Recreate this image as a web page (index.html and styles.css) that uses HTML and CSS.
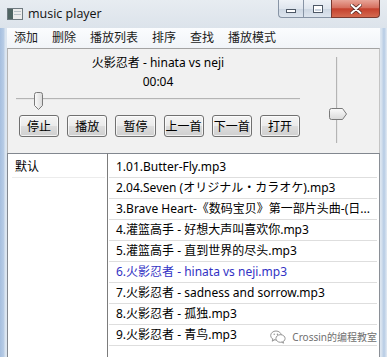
FILE: index.html
```html
<!DOCTYPE html>
<html lang="zh-CN">
<head>
    <meta charset="UTF-8">
    <meta name="viewport" content="width=device-width, initial-scale=1.0">
    <title>music player</title>
    <link rel="stylesheet" href="styles.css">
</head>
<body>
    <div class="window">
        <div class="titlebar">
            <svg class="app-icon" width="16" height="12" viewBox="0 0 16 12">
                <rect x="0.5" y="0.5" width="15" height="11" fill="#ececec" stroke="#6f7a80"/>
                <rect x="1" y="1" width="5" height="10" fill="#4f6462"/>
                <rect x="7" y="3" width="7" height="1" fill="#b9c2c8"/>
                <rect x="7" y="6" width="7" height="1" fill="#b9c2c8"/>
            </svg>
            <span class="title">music player</span>
            <div class="caption-buttons">
                <div class="cap-btn cap-min"><span class="min-glyph"></span></div>
                <div class="cap-btn cap-max"><span class="max-glyph"></span></div>
                <div class="cap-btn cap-close">
                    <svg width="12" height="10" viewBox="0 0 12 10">
                        <path d="M1.5 1 L10.5 9 M10.5 1 L1.5 9" stroke="#5a2a24" stroke-width="3.6" stroke-linecap="round"/>
                        <path d="M1.5 1 L10.5 9 M10.5 1 L1.5 9" stroke="#ffffff" stroke-width="2" stroke-linecap="round"/>
                    </svg>
                </div>
            </div>
        </div>

        <div class="client">
            <ul class="menubar">
                <li>添加</li>
                <li>删除</li>
                <li>播放列表</li>
                <li>排序</li>
                <li>查找</li>
                <li>播放模式</li>
            </ul>

            <div class="player">
                <div class="player-main">
                    <div class="song-title">火影忍者 - hinata vs neji</div>
                    <div class="song-time">00:04</div>
                    <div class="hslider">
                        <div class="track"></div>
                        <svg class="thumb" width="11" height="19" viewBox="0 0 11 19">
                            <defs>
                                <linearGradient id="thumbH" x1="0" y1="0" x2="1" y2="0">
                                    <stop offset="0" stop-color="#fbfbfb"/>
                                    <stop offset="1" stop-color="#d9d9d9"/>
                                </linearGradient>
                            </defs>
                            <path d="M1.5 2.5 Q1.5 0.5 3.5 0.5 H7.5 Q9.5 0.5 9.5 2.5 V13.5 L5.5 17.5 L1.5 13.5 Z" fill="url(#thumbH)" stroke="#7a7a7a"/>
                        </svg>
                    </div>
                    <div class="buttons">
                        <button>停止</button>
                        <button>播放</button>
                        <button>暂停</button>
                        <button>上一首</button>
                        <button>下一首</button>
                        <button>打开</button>
                    </div>
                </div>
                <div class="vslider">
                    <div class="track"></div>
                    <svg class="thumb" width="19" height="12" viewBox="0 0 19 12">
                        <defs>
                            <linearGradient id="thumbV" x1="0" y1="0" x2="0" y2="1">
                                <stop offset="0" stop-color="#fbfbfb"/>
                                <stop offset="1" stop-color="#d9d9d9"/>
                            </linearGradient>
                        </defs>
                        <path d="M2.5 0.5 H13.5 L17.5 6 L13.5 11.5 H2.5 Q0.5 11.5 0.5 9.5 V2.5 Q0.5 0.5 2.5 0.5 Z" fill="url(#thumbV)" stroke="#7a7a7a"/>
                    </svg>
                </div>
            </div>

            <div class="lists">
                <div class="playlists">
                    <div class="row">默认</div>
                </div>
                <div class="songs">
                    <div class="row">1.01.Butter-Fly.mp3</div>
                    <div class="row">2.04.Seven (オリジナル・カラオケ).mp3</div>
                    <div class="row">3.Brave Heart-《数码宝贝》第一部片头曲-(日...</div>
                    <div class="row">4.灌篮高手 - 好想大声叫喜欢你.mp3</div>
                    <div class="row">5.灌篮高手 - 直到世界的尽头.mp3</div>
                    <div class="row current">6.火影忍者 - hinata vs neji.mp3</div>
                    <div class="row">7.火影忍者 - sadness and sorrow.mp3</div>
                    <div class="row">8.火影忍者 - 孤独.mp3</div>
                    <div class="row">9.火影忍者 - 青鸟.mp3</div>

                    <div class="watermark">
                        <svg width="16" height="14" viewBox="0 0 16 14">
                            <ellipse cx="6" cy="5.5" rx="5.3" ry="4.5" fill="#ffffff" stroke="#8a8a8a" stroke-width="0.9"/>
                            <path d="M2.8 9 L2.2 11.2 L4.6 9.8" fill="#ffffff" stroke="#8a8a8a" stroke-width="0.9"/>
                            <ellipse cx="10.5" cy="8.5" rx="4.6" ry="3.8" fill="#ffffff" stroke="#8a8a8a" stroke-width="0.9"/>
                            <path d="M13 11.6 L13.6 13.2 L11.6 12.2" fill="#ffffff" stroke="#8a8a8a" stroke-width="0.9"/>
                            <circle cx="4.2" cy="4.2" r="0.7" fill="#8a8a8a"/>
                            <circle cx="7.4" cy="4.2" r="0.7" fill="#8a8a8a"/>
                        </svg>
                        <span>Crossin的编程教室</span>
                    </div>
                </div>
            </div>
        </div>
    </div>
</body>
</html>
```

FILE: styles.css
```css
* {
    box-sizing: border-box;
}

body {
    margin: 0;
    font-family: "Noto Sans", "Noto Sans CJK SC", sans-serif;
    font-size: 12px;
    color: #000;
    background-color: #d7e2ee;
}

.window {
    width: 387px;
    height: 357px;
    overflow: hidden;
    display: flex;
    flex-direction: column;
    background: linear-gradient(90deg, #a6bfdf 0, #b9cde6 4px, #dbe5f0 5px, #dbe5f0 381px, #b6cbe4 384px, #e2eaf3 387px);
}

/* title bar */
.titlebar {
    height: 28px;
    flex-shrink: 0;
    display: flex;
    align-items: flex-start;
    background: linear-gradient(180deg, #e7ecf1 0, #dce3eb 100%);
}

.app-icon {
    margin: 8px 0 0 7px;
}

.title {
    margin: 5px 0 0 5px;
    font-family: "Open Sans", "Noto Sans", sans-serif;
    font-size: 12.5px;
    line-height: 18px;
    color: #111;
}

.caption-buttons {
    margin-left: auto;
    margin-right: 7px;
    display: flex;
    height: 18px;
}

.cap-btn {
    height: 18px;
    display: flex;
    align-items: center;
    justify-content: center;
    border: 1px solid #8794a5;
    border-top: none;
}

.cap-min {
    width: 25px;
    border-right: none;
    border-radius: 0 0 0 4px;
    background: linear-gradient(180deg, #eef2f7 0, #dfe6ee 50%, #ccd6e2 51%, #dde5ee 100%);
}

.cap-max {
    width: 28px;
    border-right: none;
    background: linear-gradient(180deg, #eef2f7 0, #dfe6ee 50%, #ccd6e2 51%, #dde5ee 100%);
}

.cap-close {
    width: 49px;
    border-color: #7a3a30;
    border-radius: 0 0 4px 0;
    background: linear-gradient(180deg, #e8a598 0, #d6705f 45%, #c5412d 52%, #d46a50 100%);
}

.min-glyph {
    width: 10px;
    height: 4px;
    margin-top: 5px;
    background: #fff;
    border: 1px solid #4d5866;
}

.max-glyph {
    width: 10px;
    height: 8px;
    border: 1px solid #4d5866;
    box-shadow: inset 0 0 0 1px #fff, inset 0 2px 0 1px #fff;
    background: #c9d3df;
}

/* client area */
.client {
    flex: 1;
    margin: 0 7px;
    display: flex;
    flex-direction: column;
    background-color: #f0f0f0;
}

.menubar {
    list-style: none;
    margin: 0;
    padding: 0;
    height: 20px;
    display: flex;
    background: linear-gradient(180deg, #fbfcfe 0, #f1f4f8 100%);
}

.menubar li {
    padding: 0 7px;
    line-height: 20px;
    color: #1a1a1a;
}

.player {
    height: 105px;
    display: flex;
    border-top: 1px solid #a3a3a3;
    border-left: 1px solid #b4b4b4;
    border-right: 1px solid #c4c4c4;
    background-color: #f1f1f1;
}

.player-main {
    width: 292px;
    padding: 6px 0 0 8px;
}

.song-title,
.song-time {
    text-align: center;
    line-height: 16px;
}

.song-time {
    margin-top: 3px;
}

.hslider {
    position: relative;
    height: 18px;
}

.hslider .track {
    position: absolute;
    left: 0;
    right: 0;
    top: 8px;
    height: 2px;
    border-top: 1px solid #b4b4b4;
    border-bottom: 1px solid #e8e8e8;
}

.hslider .thumb {
    position: absolute;
    left: 17px;
    top: 2px;
}

.buttons {
    margin: 7px 0 0 3px;
    display: flex;
    gap: 8px;
}

.buttons button {
    width: 42px;
    height: 22px;
    padding: 0;
    font: inherit;
    color: #000;
    border: 1px solid #707070;
    border-radius: 3px;
    background: linear-gradient(180deg, #f4f4f4 0, #ebebeb 48%, #dddddd 52%, #cfcfcf 100%);
    box-shadow: inset 0 0 0 1px rgba(255, 255, 255, 0.7);
}

.vslider {
    position: relative;
    width: 19px;
    height: 86px;
    margin: 8px 0 0 30px;
}

.vslider .track {
    position: absolute;
    left: 6px;
    top: 0;
    bottom: 0;
    width: 2px;
    border-left: 1px solid #b4b4b4;
    border-right: 1px solid #e8e8e8;
}

.vslider .thumb {
    position: absolute;
    left: -1px;
    top: 51px;
}

/* lists */
.lists {
    flex: 1;
    display: flex;
    min-height: 0;
}

.playlists,
.songs {
    border-top: 1px solid #82878f;
    background-color: #fff;
    padding-top: 3px;
}

.playlists {
    width: 100px;
    padding-left: 4px;
    padding-right: 2px;
    border-left: 1px solid #82878f;
}

.playlists .row {
    height: 21px;
    line-height: 20px;
    padding-left: 3px;
    border-bottom: 1px solid #ececec;
}

.songs {
    position: relative;
    flex: 1;
    min-width: 0;
    padding-left: 1px;
    padding-right: 2px;
    border-left: 1px solid #7c7c7c;
    border-right: 1px solid #8a8f96;
}

.songs .row {
    height: 21px;
    line-height: 20px;
    padding-left: 7px;
    white-space: nowrap;
    overflow: hidden;
    border-bottom: 1px solid #dedede;
}

.songs .row.current {
    color: #3232c4;
}

.watermark {
    position: absolute;
    right: 2px;
    top: 175px;
    display: flex;
    align-items: center;
    gap: 6px;
    font-size: 10px;
    color: #707070;
    text-shadow: 0 0 2px #fff, 0 0 2px #fff;
}
```
